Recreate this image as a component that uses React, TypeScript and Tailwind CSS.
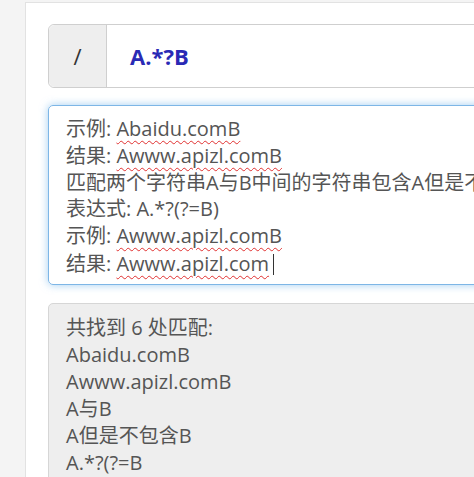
const squiggle = "underline decoration-wavy decoration-[#e03030] decoration-1 underline-offset-[4px]";

const inputLines: { label: string; value?: string; mark?: boolean }[] = [
  { label: "示例: ", value: "Abaidu.comB", mark: true },
  { label: "结果: ", value: "Awww.apizl.comB", mark: true },
  { label: "匹配两个字符串A与B中间的字符串包含A但是不包含B:" },
  { label: "表达式: A.*?(?=B)" },
  { label: "示例: ", value: "Awww.apizl.comB", mark: true },
  { label: "结果: ", value: "Awww.apizl.com", mark: true },
];

const matches = [
  "共找到 6 处匹配:",
  "Abaidu.comB",
  "Awww.apizl.comB",
  "A与B",
  "A但是不包含B",
  "A.*?(?=B",
];

export default function App() {
  return (
    <div
      className="h-[477px] w-[474px] overflow-hidden bg-[#f4f4f4] pt-[2px] pl-[25px]"
      style={{ fontFamily: '"Open Sans", "Noto Sans CJK SC", sans-serif' }}
    >
      <div className="h-[600px] w-[700px] border-l border-t border-[#e2e2e2] bg-white pl-[22px] pt-[21px]">
        {/* regex input */}
        <div className="flex h-[64px] w-[640px] rounded-[6px] border border-[#cfcfcf]">
          <div className="flex w-[58px] items-center justify-center rounded-l-[6px] border-r border-[#cfcfcf] bg-[#eeeeee] text-[22px] text-[#333]">
            /
          </div>
          <div className="flex items-center pl-[23px] text-[22px] font-bold text-[#2a2ab5]">
            A.*?B
          </div>
        </div>

        {/* test text */}
        <div className="mt-[17px] h-[180px] w-[640px] rounded-[5px] border border-[#7db6e6] pl-[17px] pt-[10px] text-[20px] leading-[26.8px] text-[#555] shadow-[0_0_8px_rgba(102,175,233,0.6)]">
          {inputLines.map((l, i) => (
            <div key={i} className="whitespace-nowrap">
              {l.label}
              {l.value && <span className={l.mark ? squiggle : ""}>{l.value}</span>}
              {i === inputLines.length - 1 && (
                <span className="ml-[4px] inline-block h-[21px] w-px translate-y-[4px] bg-[#333]" />
              )}
            </div>
          ))}
        </div>

        {/* results */}
        <div className="mt-[18px] h-[200px] w-[640px] rounded-[5px] border border-[#d6d6d6] bg-[#eeeeee] pl-[17px] pt-[10px] text-[20px] leading-[27px] text-[#555]">
          {matches.map((m, i) => (
            <div key={i} className="whitespace-nowrap">
              {m}
            </div>
          ))}
        </div>
      </div>
    </div>
  );
}
